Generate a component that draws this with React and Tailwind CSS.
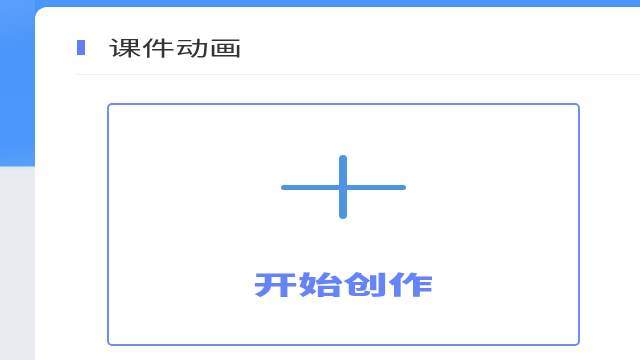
export default function App() {
  return (
    <div
      className="w-[640px] h-[360px] overflow-hidden flex bg-[linear-gradient(to_bottom,#4a95fb_0px,#4d98fb_166px,#dfe6f2_167px,#e8ebef_170px,#e8ebef_100%)]"
      style={{ fontFamily: '"Noto Sans CJK SC", "Noto Sans", sans-serif' }}
    >
      {/* left strip */}
      <div className="w-[35px] shrink-0 relative">
        <div className="absolute left-0 top-0 w-[35px] h-[167px] bg-[linear-gradient(170deg,rgba(255,255,255,0.10)_0%,rgba(255,255,255,0)_30%,rgba(255,255,255,0)_85%,rgba(255,255,255,0.08)_100%)]" />
      </div>

      {/* card */}
      <div className="flex-1 mt-[7px] bg-white rounded-tl-[12px] pl-[42px]">
        {/* header */}
        <div className="flex items-center h-[68px] pt-[14px] border-b border-[#eeeeee]">
          <div className="w-[8px] h-[15px] bg-[#5f7ffb]" />
          <div className="ml-[23px] text-[20px] leading-[20px] text-[#333333] origin-left scale-x-[1.68] whitespace-nowrap">
            课件动画
          </div>
        </div>

        {/* create box */}
        <div className="mt-[28px] ml-[30px] w-[473px] h-[243px] border-2 border-[#7189f9] rounded-[5px] flex flex-col items-center">
          <div className="mt-[50px] w-[125px] h-[64px] relative">
            <div className="absolute left-0 right-0 top-[30px] h-[5px] rounded-full bg-[#4f93e3] blur-[0.4px]" />
            <div className="absolute top-0 bottom-0 left-[58px] w-[8px] rounded-full bg-[#4f93e3] blur-[0.4px]" />
          </div>
          <div className="mt-[50px] text-[25px] leading-[28px] font-black text-[#6584fa] scale-x-[1.8] whitespace-nowrap">
            开始创作
          </div>
        </div>
      </div>
    </div>
  );
}
